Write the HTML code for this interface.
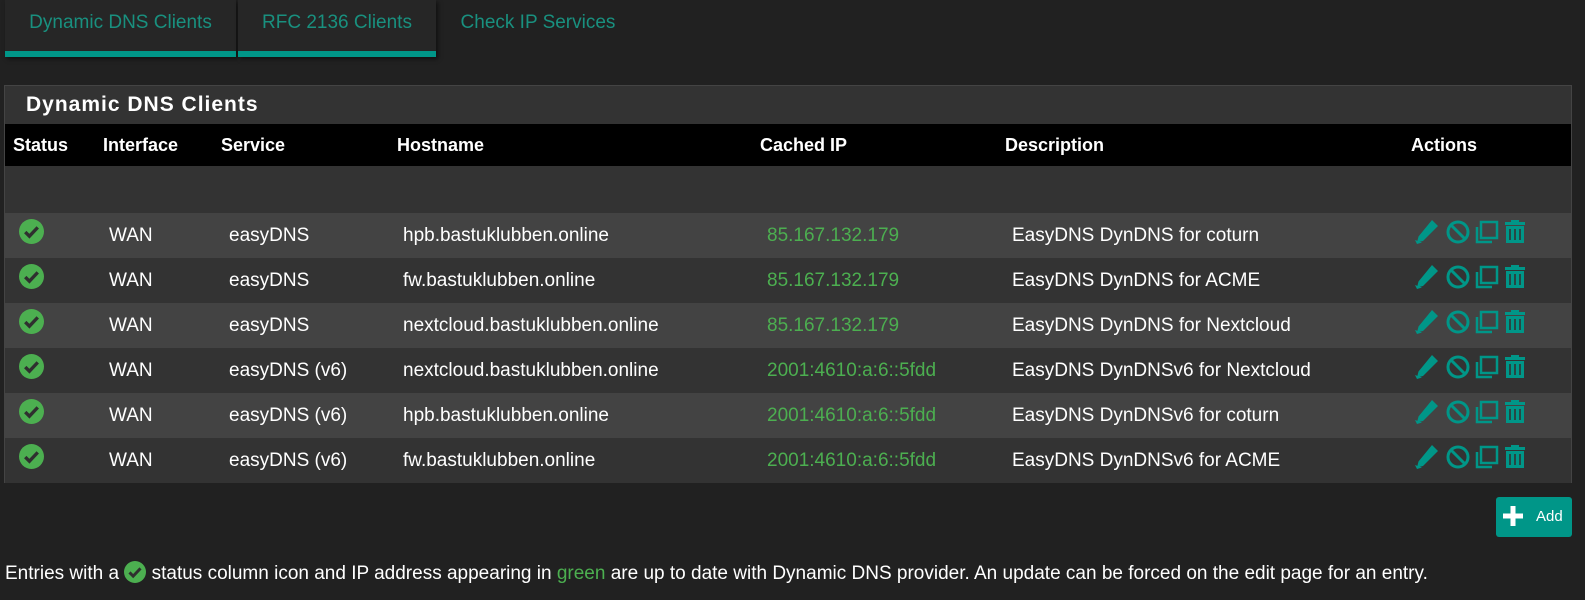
<!DOCTYPE html>
<html><head><meta charset="utf-8"><style>
*{margin:0;padding:0;box-sizing:border-box}
body{width:1585px;height:600px;background:#212121;font-family:"Liberation Sans",sans-serif;color:#fff;position:relative;overflow:hidden;font-size:19px}
.a{position:absolute;white-space:nowrap}
.tab{position:absolute;top:0;height:57px;color:#19907f;font-size:19px;line-height:46px;text-align:center}
.tab.on{background:#262626;border-bottom:6px solid #009688;box-shadow:2px 2px 4px rgba(0,0,0,.5)}
.panel{position:absolute;left:4px;top:85px;width:1568px;height:398px;border:1px solid #444;background:#333}
.row{position:absolute;left:0;width:1566px;height:45px}
.row .a{top:0;line-height:45px}
.g{color:#4caf50}
svg{display:block}
</style></head><body>
<div class="tab on" style="left:5px;width:231px">Dynamic DNS Clients</div>
<div class="tab on" style="left:238px;width:198px">RFC 2136 Clients</div>
<div class="tab" style="left:440px;width:196px">Check IP Services</div>

<div class="panel">
<div class="a" style="left:21px;top:0;line-height:37px;font-size:21px;font-weight:bold;letter-spacing:1px">Dynamic DNS Clients</div>
<div class="row" style="top:38px;height:42px;background:#000;font-weight:bold;font-size:18px">
<div class="a" style="left:8px;line-height:42px">Status</div>
<div class="a" style="left:98px;line-height:42px">Interface</div>
<div class="a" style="left:216px;line-height:42px">Service</div>
<div class="a" style="left:392px;line-height:42px">Hostname</div>
<div class="a" style="left:755px;line-height:42px">Cached IP</div>
<div class="a" style="left:1000px;line-height:42px">Description</div>
<div class="a" style="left:1406px;line-height:42px">Actions</div>
</div>
<div class="row" style="top:80px;height:47px;background:#333"></div>
</div>

<svg width="0" height="0" style="position:absolute"><defs>
<symbol id="ok" viewBox="0 0 24 24"><circle cx="12" cy="12" r="12" fill="#4caf50"/><path d="M6 12.5l4 4 8-8.5" stroke="#2f2f2f" stroke-width="3.2" fill="none"/></symbol>
<symbol id="acts" viewBox="0 0 112 26">
<g fill="#009688">
<path d="M19 1l6 6-15 15-6 1.5 1.5-6z"/><path d="M2 21l2 4 5-1.5z"/>
<circle cx="45" cy="13" r="10" fill="none" stroke="#009688" stroke-width="3"/><path d="M38 6l14 14" stroke="#009688" stroke-width="3"/>
<rect x="68" y="3" width="16" height="16" fill="none" stroke="#009688" stroke-width="2.5"/><path d="M64 8v15h15" fill="none" stroke="#009688" stroke-width="2.5"/>
<rect x="92" y="3" width="20" height="3"/><rect x="98" y="1" width="8" height="3"/><path d="M93 7h18v17h-18z"/>
</g>
<path d="M97 10v11M102 10v11M107 10v11" stroke="#333" stroke-width="1.6"/>
</symbol>
</defs></svg>

<div class="row" style="position:absolute;left:5px;top:213px;background:#434343"><svg class="a" style="left:14px;top:6px" width="25" height="25"><use href="#ok"/></svg><div class="a" style="left:104px">WAN</div><div class="a" style="left:224px">easyDNS</div><div class="a" style="left:398px">hpb.bastuklubben.online</div><div class="a g" style="left:762px">85.167.132.179</div><div class="a" style="left:1007px">EasyDNS DynDNS for coturn</div><svg class="a" style="left:1408px;top:6px" width="112" height="26"><use href="#acts"/></svg></div>
<div class="row" style="position:absolute;left:5px;top:258px;background:#333"><svg class="a" style="left:14px;top:6px" width="25" height="25"><use href="#ok"/></svg><div class="a" style="left:104px">WAN</div><div class="a" style="left:224px">easyDNS</div><div class="a" style="left:398px">fw.bastuklubben.online</div><div class="a g" style="left:762px">85.167.132.179</div><div class="a" style="left:1007px">EasyDNS DynDNS for ACME</div><svg class="a" style="left:1408px;top:6px" width="112" height="26"><use href="#acts"/></svg></div>
<div class="row" style="position:absolute;left:5px;top:303px;background:#434343"><svg class="a" style="left:14px;top:6px" width="25" height="25"><use href="#ok"/></svg><div class="a" style="left:104px">WAN</div><div class="a" style="left:224px">easyDNS</div><div class="a" style="left:398px">nextcloud.bastuklubben.online</div><div class="a g" style="left:762px">85.167.132.179</div><div class="a" style="left:1007px">EasyDNS DynDNS for Nextcloud</div><svg class="a" style="left:1408px;top:6px" width="112" height="26"><use href="#acts"/></svg></div>
<div class="row" style="position:absolute;left:5px;top:348px;background:#333"><svg class="a" style="left:14px;top:6px" width="25" height="25"><use href="#ok"/></svg><div class="a" style="left:104px">WAN</div><div class="a" style="left:224px">easyDNS (v6)</div><div class="a" style="left:398px">nextcloud.bastuklubben.online</div><div class="a g" style="left:762px">2001:4610:a:6::5fdd</div><div class="a" style="left:1007px">EasyDNS DynDNSv6 for Nextcloud</div><svg class="a" style="left:1408px;top:6px" width="112" height="26"><use href="#acts"/></svg></div>
<div class="row" style="position:absolute;left:5px;top:393px;background:#434343"><svg class="a" style="left:14px;top:6px" width="25" height="25"><use href="#ok"/></svg><div class="a" style="left:104px">WAN</div><div class="a" style="left:224px">easyDNS (v6)</div><div class="a" style="left:398px">hpb.bastuklubben.online</div><div class="a g" style="left:762px">2001:4610:a:6::5fdd</div><div class="a" style="left:1007px">EasyDNS DynDNSv6 for coturn</div><svg class="a" style="left:1408px;top:6px" width="112" height="26"><use href="#acts"/></svg></div>
<div class="row" style="position:absolute;left:5px;top:438px;background:#333"><svg class="a" style="left:14px;top:6px" width="25" height="25"><use href="#ok"/></svg><div class="a" style="left:104px">WAN</div><div class="a" style="left:224px">easyDNS (v6)</div><div class="a" style="left:398px">fw.bastuklubben.online</div><div class="a g" style="left:762px">2001:4610:a:6::5fdd</div><div class="a" style="left:1007px">EasyDNS DynDNSv6 for ACME</div><svg class="a" style="left:1408px;top:6px" width="112" height="26"><use href="#acts"/></svg></div>

<div class="a" style="left:1496px;top:497px;width:76px;height:40px;background:#009688;border-radius:3px">
<svg class="a" style="left:6px;top:8px" width="22" height="22"><path d="M11 1v20M1 11h20" stroke="#fff" stroke-width="5"/></svg>
<div class="a" style="left:40px;top:0;line-height:40px;font-size:15px">Add</div></div>

<div class="a" style="left:5px;top:561px;line-height:26px">Entries with a <svg style="display:inline-block;vertical-align:-4px" width="22" height="22"><use href="#ok"/></svg> status column icon and IP address appearing in <span class="g">green</span> are up to date with Dynamic DNS provider. An update can be forced on the edit page for an entry.</div>
</body></html>
